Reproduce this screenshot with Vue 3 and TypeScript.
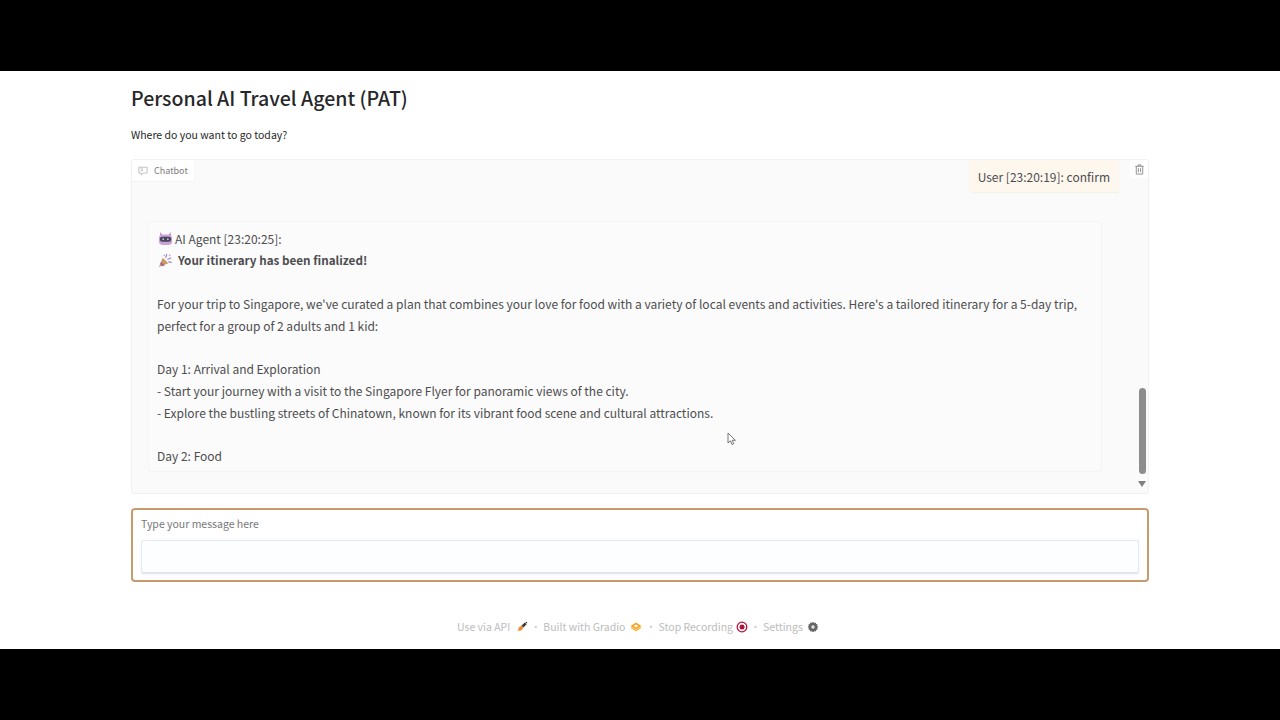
<script setup lang="ts">
</script>

<template>
  <div class="page">
    <div class="bar"></div>
    <main class="main">
      <h1 class="title">Personal AI Travel Agent (PAT)</h1>
      <p class="sub">Where do you want to go today?</p>

      <section class="chat">
        <div class="tag">
          <svg class="tag-icon" viewBox="0 0 12 12" width="10" height="10" fill="none" stroke="#b5b5b5" stroke-width="1">
            <path d="M1 1.5h10v7H6.5L4 10.8V8.5H1z" />
            <path d="M3 3.5h3M3 5.5h3" />
          </svg>
          <span>Chatbot</span>
        </div>
        <button class="trash" aria-label="Clear">
          <svg viewBox="0 0 12 12" width="11" height="11" fill="none" stroke="#8a8a8a" stroke-width="1">
            <path d="M1.5 2.5h9M4.5 2.5V1h3v1.5M2.5 2.5v8.5h7V2.5M4.8 4.5V9M7.2 4.5V9" />
          </svg>
        </button>

        <div class="thread">
          <div class="user-row">
            <div class="user-msg">User [23:20:19]: confirm</div>
          </div>
          <div class="bot-msg">
            <div class="line head">
              <svg class="robot" viewBox="0 0 16 16" width="15" height="15">
                <path d="M2.5 1 4.5 4h7l2-3 .5 4H2z" fill="#b78fd6" />
                <rect x="1" y="4" width="14" height="11" rx="4" fill="#c9a3d8" />
                <rect x="2" y="6" width="12" height="5.5" rx="2.5" fill="#4a4458" />
                <circle cx="5.5" cy="8.7" r="1" fill="#a9c8e0" />
                <circle cx="10.5" cy="8.7" r="1" fill="#a9c8e0" />
              </svg>
              <span>AI Agent [23:20:25]:</span>
            </div>
            <div class="line">
              <svg class="party" viewBox="0 0 16 16" width="15" height="15">
                <path d="M1 15 5 5l6 6z" fill="#c9995f" />
                <path d="M3.2 9.6 7 13.4l-2 .8-2.6-2.6z" fill="#a45a9f" />
                <path d="M8 5 9.5 1M10 7l4-2M11 9.5l3.5.5" stroke="#9a7fd0" stroke-width="1.2" fill="none" />
                <circle cx="12.5" cy="2.5" r="1" fill="#e2a0bd" />
                <circle cx="6.5" cy="2.5" r=".8" fill="#7fb8d8" />
              </svg>
              <strong>Your itinerary has been finalized!</strong>
            </div>
            <div class="line blank"></div>
            <div class="line">For your trip to Singapore, we've curated a plan that combines your love for food with a variety of local events and activities. Here's a tailored itinerary for a 5-day trip,</div>
            <div class="line">perfect for a group of 2 adults and 1 kid:</div>
            <div class="line blank"></div>
            <div class="line">Day 1: Arrival and Exploration</div>
            <div class="line">- Start your journey with a visit to the Singapore Flyer for panoramic views of the city.</div>
            <div class="line">- Explore the bustling streets of Chinatown, known for its vibrant food scene and cultural attractions.</div>
            <div class="line blank"></div>
            <div class="line">Day 2: Food</div>
          </div>
        </div>

        <div class="scroll-thumb"></div>
        <div class="scroll-arrow"></div>
      </section>

      <label class="input-box">
        <span class="input-label">Type your message here</span>
        <input class="input" type="text" />
      </label>

      <footer class="footer">
        <span class="link">Use via API
          <svg class="fi api" viewBox="0 0 12 12" width="11" height="11">
            <path d="M1 11 2 7l3-2 2 2-2 3z" fill="#ef8a2c" />
            <path d="M5 5 8.5 1.5 10.5 3.5 7 7z" fill="#3a3a3a" />
            <path d="M9 1h2v2z" fill="#222" />
          </svg>
        </span>
        <span class="dot">·</span>
        <span class="link tight">Built with Gradio
          <svg class="fi grad" viewBox="0 0 12 12" width="12" height="12">
            <path d="M6 1.5 11.5 5 6 8.5.5 5z" fill="#f5a623" />
            <path d="M.5 7 6 10.5 11.5 7 10 6 6 8.7 2 6z" fill="#f7b84d" />
            <path d="M3.8 5 6 3.6 8.2 5 6 6.4z" fill="#fff" />
          </svg>
        </span>
        <span class="dot">·</span>
        <span class="link rec-link">Stop Recording
          <svg class="fi rec" viewBox="0 0 12 12" width="12" height="12">
            <circle cx="6" cy="6" r="4.8" fill="#fff" stroke="#b3143c" stroke-width="1.3" />
            <circle cx="6" cy="6" r="2.5" fill="#b3143c" />
          </svg>
        </span>
        <span class="dot">·</span>
        <span class="link tight">Settings
          <svg class="fi gear" viewBox="0 0 12 12" width="12" height="12">
            <path d="M6 .8 7.1 2l1.5-.4.5 1.5 1.5.5-.4 1.5L11.2 6l-1 1.1.4 1.5-1.5.5-.5 1.5-1.5-.4L6 11.2l-1.1-1-1.5.4-.5-1.5-1.5-.5.4-1.5L.8 6l1-1.1-.4-1.5 1.5-.5.5-1.5 1.5.4z" fill="#666" />
            <circle cx="6" cy="6" r="1.7" fill="#e6e6e6" />
          </svg>
        </span>
      </footer>

      <svg class="cursor" viewBox="0 0 10 14" width="10" height="14">
        <path d="M1 1v10l2.4-2.2L5 12.5l1.7-.7L5.2 8.3H8.4z" fill="#fff" stroke="#666" stroke-width=".9" />
      </svg>
    </main>
    <div class="bar"></div>
  </div>
</template>

<style scoped>
.page {
  height: 720px;
  display: flex;
  flex-direction: column;
  font-family: "Noto Sans CJK SC", "Noto Sans", sans-serif;
  background: #fff;
  overflow: hidden;
}
.bar {
  height: 71px;
  flex: none;
  background: #000;
}
.main {
  flex: 1;
  position: relative;
  padding: 0 131px;
  display: flex;
  flex-direction: column;
}
.title {
  margin: 12px 0 0;
  font-size: 19.55px;
  line-height: 29px;
  font-weight: 500;
  color: #27272a;
}
.sub {
  margin: 14px 0 0;
  font-size: 10.5px;
  line-height: 17px;
  color: #27272a;
}
.chat {
  margin-top: 16px;
  height: 335px;
  box-sizing: border-box;
  position: relative;
  border: 1px solid #f1f1f1;
  border-radius: 3px;
  background: #fafafa;
  overflow: hidden;
}
.tag {
  position: absolute;
  left: 0;
  top: 0;
  width: 56px;
  height: 21px;
  padding: 0 0 0 6px;
  display: flex;
  align-items: center;
  gap: 6px;
  font-size: 9px;
  color: #7d7d7d;
  background: #fff;
  border-right: 1px solid #f7f7f7;
  border-bottom: 1px solid #f3f3f3;
}
.trash {
  position: absolute;
  right: 0;
  top: 0;
  width: 18px;
  height: 18px;
  padding: 0;
  border: 0;
  display: flex;
  align-items: center;
  justify-content: center;
  background: #fff;
}
.thread {
  padding: 0 29px 0 16px;
  display: flex;
  flex-direction: column;
}
.user-row {
  display: flex;
  justify-content: flex-end;
}
.user-msg {
  height: 32px;
  box-sizing: border-box;
  padding: 0 9px;
  display: flex;
  align-items: center;
  font-size: 12px;
  color: #4d4d50;
  background: #fdf7ee;
  border-radius: 0 0 0 4px;
  box-shadow: 0 1px 1px #f3efe9;
}
.bot-msg {
  margin-top: 29px;
  margin-right: 17px;
  height: 251px;
  box-sizing: border-box;
  padding: 5.6px 8px 0;
  border: 1px solid #f4f4f4;
  border-radius: 3px;
  background: #fbfbfb;
  font-size: 12px;
  color: #4d4d50;
}
.line {
  height: 21.75px;
  line-height: 21.75px;
  display: flex;
  align-items: center;
  white-space: pre;
}
.blank {
  height: 21.75px;
}
.robot {
  margin: 0 2px 0 1px;
  flex: none;
}
.party {
  margin: 0 5px 0 1px;
  flex: none;
}
.line strong {
  font-size: 11.7px;
  font-weight: 600;
  color: #4d4d50;
}
.scroll-thumb {
  position: absolute;
  right: 2px;
  top: 228px;
  width: 7px;
  height: 86px;
  border-radius: 4px;
  background: #8c8c8c;
}
.scroll-arrow {
  position: absolute;
  right: 2px;
  top: 321px;
  width: 0;
  height: 0;
  border-left: 4px solid transparent;
  border-right: 4px solid transparent;
  border-top: 6px solid #808080;
}
.input-box {
  margin-top: 14px;
  height: 74px;
  box-sizing: border-box;
  padding: 5px 8px 6px;
  display: flex;
  flex-direction: column;
  border: 2px solid #c89b6c;
  border-radius: 4px;
  background: #fff;
}
.input-label {
  font-size: 10.5px;
  line-height: 17px;
  color: #78787c;
}
.input {
  margin-top: 8px;
  height: 34px;
  box-sizing: border-box;
  padding: 0;
  border: 1px solid #e6ebf3;
  border-bottom: 2px solid #e0e4f0;
  border-radius: 3px;
  background: #fcfeff;
  outline: none;
  box-shadow: 0 0 2px #e4ecf6;
}
.footer {
  margin-top: 36px;
  height: 17px;
  margin-left: 326px;
  display: flex;
  align-items: center;
  font-size: 10.5px;
  color: #bcbcbc;
}
.link {
  display: flex;
  align-items: center;
  gap: 7px;
}
.tight {
  gap: 4px;
}
.rec-link {
  gap: 3px;
}
.grad {
  margin-right: 2px;
}
.dot {
  width: 15px;
  text-align: center;
  color: #cfcfcf;
}
.cursor {
  position: absolute;
  left: 727px;
  top: 361px;
}
</style>
